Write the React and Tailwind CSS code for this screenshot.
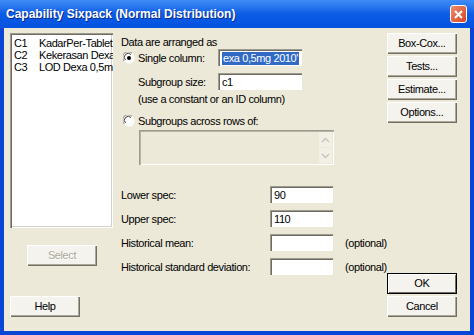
import React from 'react';

const font = { fontFamily: '"Liberation Sans", Arial, sans-serif' };

const Btn = ({ children, disabled, isDefault, className = '' }) => (
  <button
    className={`h-[21px] w-[70px] shrink-0 flex items-center justify-center text-[11px] bg-[#f4f3ee] ${
      isDefault
        ? 'shadow-[inset_1px_1px_0_#000,inset_-1px_-1px_0_#000,inset_2px_2px_0_#fff,inset_-2px_-2px_0_#716f64]'
        : 'shadow-[inset_1px_1px_0_#fff,inset_-1px_-1px_0_#716f64,inset_-2px_-2px_0_#aca899]'
    } ${disabled ? 'text-[#aca899] [text-shadow:1px_1px_0_#fff]' : 'text-black'} ${className}`}
  >
    {children}
  </button>
);

const Field = ({ children, className = '' }) => (
  <div
    className={`h-[17px] shrink-0 bg-white flex items-center pl-[4px] pt-[2px] text-[11px] overflow-hidden whitespace-nowrap shadow-[inset_1px_1px_0_#9d9b8f,inset_2px_2px_0_#6f6d63,inset_-1px_-1px_0_#ffffff] ${className}`}
  >
    {children}
  </div>
);

const Radio = ({ checked }) => (
  <svg width="12" height="12" viewBox="0 0 12 12" className="shrink-0">
    <circle cx="6" cy="6" r="5.5" fill="#fff" />
    <path d="M1.2 9 A5 5 0 0 1 9 1.2" stroke="#8a887c" strokeWidth="1" fill="none" />
    <path d="M2.5 8 A3.6 3.6 0 0 1 8 2.5" stroke="#404040" strokeWidth="1" fill="none" />
    <path d="M9.5 3 A5 5 0 0 1 3 9.5" stroke="#f4f3ee" strokeWidth="1" fill="none" />
    {checked && <circle cx="6" cy="6" r="2" fill="#000" />}
  </svg>
);

const SpecRow = ({ label, value, optional, className = '' }) => (
  <div className={`flex items-center ${className}`}>
    <span className="w-[149px] leading-[12px] whitespace-nowrap">{label}</span>
    <Field className="w-[63px]">{value}</Field>
    {optional && <span className="ml-[12px] leading-[12px]">(optional)</span>}
  </div>
);

const Chevron = ({ up }) => (
  <svg width="9" height="6" viewBox="0 0 9 6">
    <path d={up ? 'M1 5 L4.5 1.5 L8 5' : 'M1 1 L4.5 4.5 L8 1'} stroke="#c5c3b8" strokeWidth="1.3" fill="none" />
  </svg>
);

export default function App() {
  const columns = [
    { id: 'C1', name: 'KadarPer-Tablet Dexa' },
    { id: 'C2', name: 'Kekerasan Dexa 0,5mg' },
    { id: 'C3', name: 'LOD Dexa 0,5mg 2010' },
  ];

  return (
    <div style={font} className="w-[474px] h-[335px] bg-[#0a46d6] flex flex-col overflow-hidden text-black">
      {/* Title bar */}
      <div className="h-[28px] shrink-0 flex items-center justify-between pl-[6px] pr-[7px] bg-gradient-to-b from-[#3f8cf5] via-[#0c5ce6] to-[#0553e0]">
        <span className="text-white font-bold text-[12px] [text-shadow:1px_1px_0_#0a2a8a]">
          Capability Sixpack (Normal Distribution)
        </span>
        <div className="w-[17px] h-[18px] rounded-[3px] border border-white bg-gradient-to-br from-[#ec8a6e] to-[#d8431f] flex items-center justify-center">
          <svg width="9" height="9" viewBox="0 0 9 9">
            <path d="M1 1 L8 8 M8 1 L1 8" stroke="#fff" strokeWidth="2" />
          </svg>
        </div>
      </div>

      {/* Body */}
      <div className="flex-1 mx-[4px] mb-[4px] bg-[#ece9d8] flex pl-[6px] pt-[5px] pr-[15px] pb-[14px] text-[11px] tracking-[-0.4px]">
        {/* Left column */}
        <div className="w-[103px] flex flex-col">
          <div className="h-[195px] bg-white pt-[4px] pl-[4px] overflow-hidden shadow-[inset_1px_1px_0_#9d9b8f,inset_2px_2px_0_#6f6d63,inset_-1px_-1px_0_#ffffff,inset_-2px_-2px_0_#d4d0c8]">
            {columns.map((c) => (
              <div key={c.id} className="flex leading-[12px] whitespace-nowrap">
                <span className="w-[25px] shrink-0">{c.id}</span>
                <span className="overflow-hidden">{c.name}</span>
              </div>
            ))}
          </div>
          <Btn disabled className="mt-[17px] ml-[17px]">Select</Btn>
          <Btn className="mt-[30px]">Help</Btn>
        </div>

        {/* Middle column */}
        <div className="flex-1 ml-[8px] flex flex-col">
          <div className="mt-[3px] leading-[12px]">Data are arranged as</div>
          <div className="mt-[1px] h-[17px] flex items-center">
            <div className="w-[17px] pl-[2px]"><Radio checked /></div>
            <span className="w-[80px] leading-[12px] whitespace-nowrap">Single column:</span>
            <Field className="w-[84px] pl-[2px]">
              <span className="bg-[#316ac5] text-white leading-[13px] px-[1px]">exa 0,5mg 2010'</span>
            </Field>
          </div>
          <div className="mt-[7px] h-[17px] flex items-center pl-[17px]">
            <span className="w-[80px] leading-[12px] whitespace-nowrap">Subgroup size:</span>
            <Field className="w-[84px]">c1</Field>
          </div>
          <div className="mt-[3px] pl-[17px] leading-[12px]">(use a constant or an ID column)</div>
          <div className="mt-[10px] flex items-center">
            <div className="w-[17px] pl-[2px]"><Radio /></div>
            <span className="leading-[12px]">Subgroups across rows of:</span>
          </div>
          <div className="mt-[3px] ml-[18px] w-[195px] h-[35px] flex justify-end pr-[2px] pt-[2px] shadow-[inset_1px_1px_0_#9d9b8f,inset_2px_2px_0_#b7b4a6,inset_-1px_-1px_0_#ffffff]">
            <div className="flex flex-col gap-[1px]">
              <div className="w-[13px] h-[15px] bg-[#f1efe6] flex items-center justify-center"><Chevron up /></div>
              <div className="w-[13px] h-[15px] bg-[#f1efe6] flex items-center justify-center"><Chevron /></div>
            </div>
          </div>
          <SpecRow label="Lower spec:" value="90" className="mt-[21px]" />
          <SpecRow label="Upper spec:" value="110" className="mt-[7px]" />
          <SpecRow label="Historical mean:" value="" optional className="mt-[7px]" />
          <SpecRow label="Historical standard deviation:" value="" optional className="mt-[7px]" />
        </div>

        {/* Right column */}
        <div className="w-[70px] flex flex-col gap-[2px]">
          <Btn>Box-Cox...</Btn>
          <Btn>Tests...</Btn>
          <Btn>Estimate...</Btn>
          <Btn>Options...</Btn>
          <Btn isDefault className="mt-auto">OK</Btn>
          <Btn>Cancel</Btn>
        </div>
      </div>
    </div>
  );
}
